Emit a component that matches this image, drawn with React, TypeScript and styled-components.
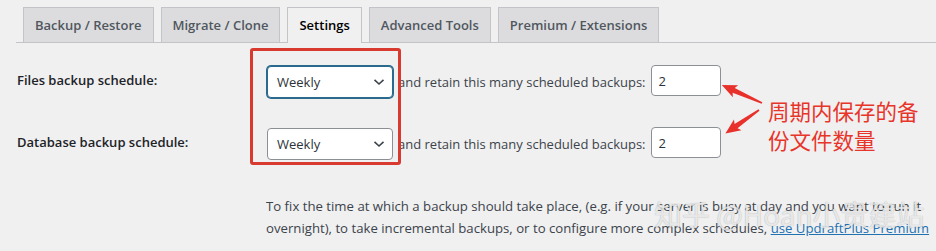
import React from "react";
import styled, { createGlobalStyle } from "styled-components";

const GlobalStyle = createGlobalStyle`
  html, body {
    margin: 0;
    padding: 0;
    background: #f0f0f1;
  }
  body {
    font-family: "Open Sans", "Noto Sans", Arial, sans-serif;
    font-size: 13px;
    color: #3c434a;
  }
`;

const tabs = [
  "Backup / Restore",
  "Migrate / Clone",
  "Settings",
  "Advanced Tools",
  "Premium / Extensions",
];

const schedules = [
  { label: "Files backup schedule:", value: "Weekly", retain: "2", focused: true },
  { label: "Database backup schedule:", value: "Weekly", retain: "2", focused: false },
];

const Chevron: React.FC = () => (
  <ChevronIcon width="12" height="8" viewBox="0 0 12 8">
    <path d="M1.5 1.8 L6 6 L10.5 1.8" fill="none" stroke="#3c434a" strokeWidth="1.6" />
  </ChevronIcon>
);

const Arrow: React.FC<{ x: number; y: number; length: number; angle: number }> = ({
  x,
  y,
  length,
  angle,
}) => {
  const L = length;
  const points = [
    [0, -0.9],
    [L - 13, -2.6],
    [L - 15, -6.5],
    [L, 0],
    [L - 15, 6.5],
    [L - 13, 2.6],
    [0, 0.9],
  ]
    .map((p) => p.join(","))
    .join(" ");
  return <polygon points={points} fill="#e8312a" transform={`translate(${x} ${y}) rotate(${angle})`} />;
};

const App: React.FC = () => {
  return (
    <Page>
      <GlobalStyle />
      <TabBar>
        {tabs.map((t) => (
          <Tab key={t} $active={t === "Settings"}>
            {t}
          </Tab>
        ))}
      </TabBar>

      <Form>
        {schedules.map((s) => (
          <Row key={s.label}>
            <Label>{s.label}</Label>
            <Controls>
              <SelectWrap>
                <Select $focused={s.focused} defaultValue={s.value}>
                  <option>Manual</option>
                  <option>Daily</option>
                  <option>Weekly</option>
                  <option>Monthly</option>
                </Select>
                <Chevron />
              </SelectWrap>
              <Retain>and retain this many scheduled backups:</Retain>
              <NumberInput type="text" defaultValue={s.retain} />
            </Controls>
          </Row>
        ))}
      </Form>

      <Description>
        To fix the time at which a backup should take place, (e.g. if your server is busy at day and you want to run it
        <br />
        overnight), to take incremental backups, or to configure more complex schedules,{" "}
        <Link href="#">use UpdraftPlus Premium</Link>
      </Description>

      <Highlight />
      <Arrows width="936" height="251" viewBox="0 0 936 251">
        <Arrow x={762} y={103} length={44} angle={204} />
        <Arrow x={759} y={110} length={41} angle={145} />
      </Arrows>
      <Note>
        周期内保存的备
        <br />
        份文件数量
      </Note>
      <Watermark>知乎 @Hoan小贵建站</Watermark>
    </Page>
  );
};

export default App;

const Page = styled.div`
  position: relative;
  width: 936px;
  height: 251px;
  overflow: hidden;
  padding-top: 7px;
  box-sizing: border-box;
`;

const TabBar = styled.nav`
  display: flex;
  gap: 7px;
  margin-left: 16px;
  padding-left: 7px;
  border-bottom: 1px solid #c3c4c7;
`;

const Tab = styled.a<{ $active?: boolean }>`
  display: block;
  padding: 5px 11px;
  font-size: 13px;
  line-height: 24px;
  font-weight: 600;
  border: 1px solid #c3c4c7;
  border-bottom: none;
  margin-bottom: ${(p) => (p.$active ? "-1px" : "0")};
  padding-bottom: ${(p) => (p.$active ? "6px" : "5px")};
  background: ${(p) => (p.$active ? "#f0f0f1" : "#dcdcde")};
  color: ${(p) => (p.$active ? "#000" : "#50575e")};
  white-space: nowrap;
`;

const Form = styled.div`
  display: flex;
  flex-direction: column;
  padding-top: 8px;
`;

const Row = styled.div`
  display: flex;
  align-items: center;
  height: 62px;
`;

const Label = styled.div`
  width: 250px;
  padding-left: 17px;
  padding-bottom: 5px;
  font-weight: 600;
  color: #1d2327;
  font-size: 13px;
`;

const Controls = styled.div`
  display: flex;
  align-items: center;
`;

const SelectWrap = styled.div`
  position: relative;
  display: flex;
`;

const Select = styled.select<{ $focused?: boolean }>`
  appearance: none;
  width: 126px;
  height: 32px;
  padding: 0 24px 0 9px;
  font-family: inherit;
  font-size: 13px;
  color: #2c3338;
  background: #fff;
  border-radius: 4px;
  border: 1px solid ${(p) => (p.$focused ? "#2b6a8f" : "#8c8f94")};
  box-shadow: ${(p) => (p.$focused ? "0 0 0 1px #2b6a8f" : "none")};
  outline: none;
`;

const ChevronIcon = styled.svg`
  position: absolute;
  right: 8px;
  top: 12px;
  pointer-events: none;
`;

const Retain = styled.span`
  margin: 0 5px 0 5px;
  color: #3c434a;
  font-size: 13px;
  white-space: nowrap;
`;

const NumberInput = styled.input`
  width: 70px;
  height: 31px;
  box-sizing: border-box;
  margin-bottom: 3px;
  padding: 0 7px;
  font-family: inherit;
  font-size: 13px;
  color: #2c3338;
  background: #fff;
  border: 1px solid #8c8f94;
  border-radius: 4px;
  outline: none;
`;

const Description = styled.p`
  margin: 20px 0 0 266px;
  font-size: 13.2px;
  line-height: 22px;
  color: #3c434a;
  white-space: nowrap;
`;

const Link = styled.a`
  color: #2271b1;
  text-decoration: underline;
`;

const Highlight = styled.div`
  position: absolute;
  left: 250px;
  top: 48px;
  width: 151px;
  height: 117px;
  box-sizing: border-box;
  border: 3px solid #d93a2f;
  border-radius: 3px;
  pointer-events: none;
`;

const Arrows = styled.svg`
  position: absolute;
  left: 0;
  top: 0;
  pointer-events: none;
`;

const Note = styled.div`
  position: absolute;
  left: 768px;
  top: 96px;
  font-family: "Noto Sans CJK SC", sans-serif;
  font-size: 21.5px;
  line-height: 29px;
  color: #e8352a;
`;

const Watermark = styled.div`
  position: absolute;
  left: 654px;
  top: 194px;
  font-family: "Noto Sans CJK SC", sans-serif;
  font-size: 28px;
  line-height: 40px;
  color: rgba(255, 255, 255, 0.75);
  text-shadow: 0 0 1px rgba(0, 0, 0, 0.35);
  white-space: nowrap;
  pointer-events: none;
`;
